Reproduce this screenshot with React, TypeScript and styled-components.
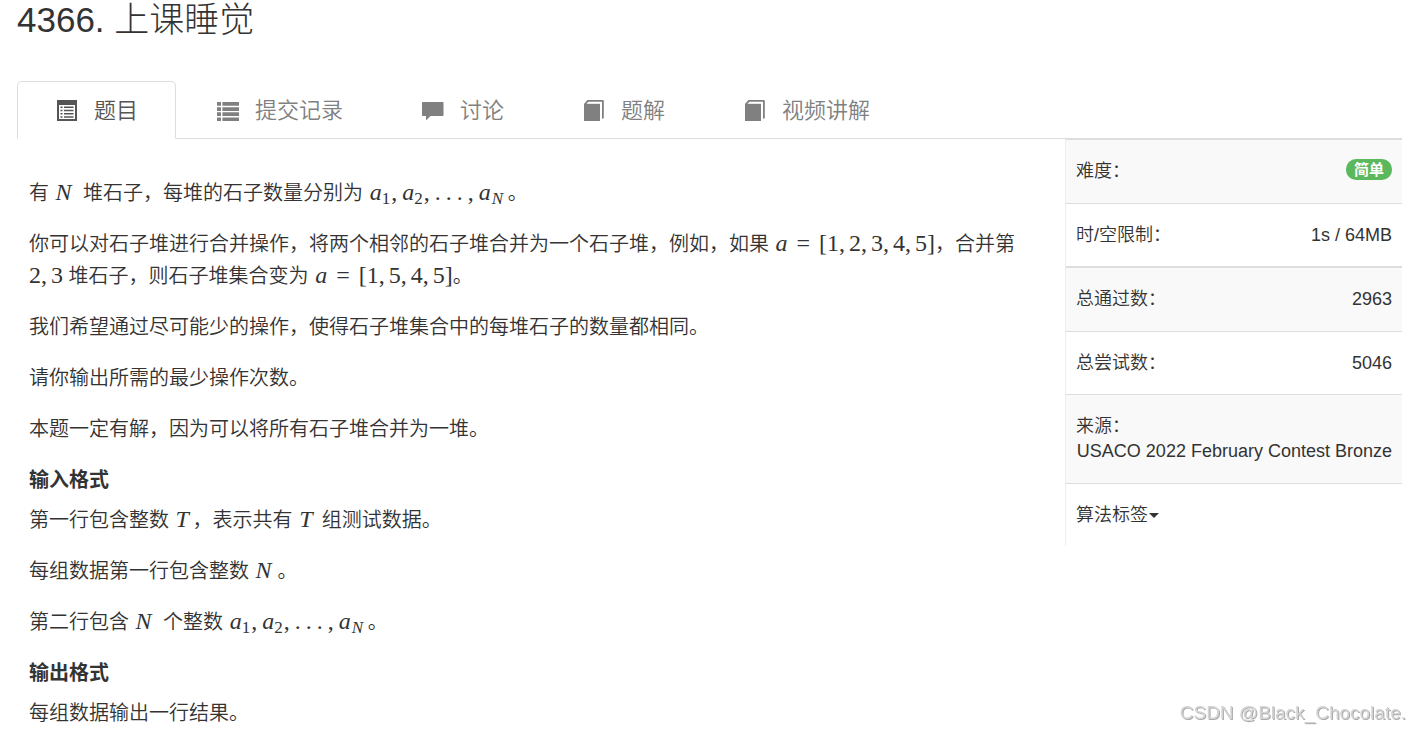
import React from "react";
import styled, { createGlobalStyle } from "styled-components";

const GlobalStyle = createGlobalStyle`
  * { box-sizing: border-box; }
  body {
    margin: 0;
    background: #fff;
    color: #333;
    font-family: "Liberation Sans", "Noto Sans CJK SC", sans-serif;
    font-size: 18px;
    font-weight: 350;
  }
`;

const Page = styled.div`
  padding: 0 19px 0 17px;
`;

const Title = styled.h1`
  margin: 0 0 42px;
  font-size: 35px;
  line-height: 39px;
  font-weight: 300;
`;

const Tabs = styled.nav`
  display: flex;
  gap: 2px;
  border-bottom: 1px solid #ddd;
`;

const Tab = styled.a<{ $active?: boolean }>`
  display: flex;
  align-items: center;
  gap: 16px;
  height: 58px;
  margin-bottom: -1px;
  padding: 2px 37px 0 38px;
  border: 1px solid ${(p) => (p.$active ? "#ddd" : "transparent")};
  border-bottom-color: ${(p) => (p.$active ? "#fff" : "transparent")};
  border-radius: 5px 5px 0 0;
  color: ${(p) => (p.$active ? "#555" : "#808080")};
  font-size: 22px;
  line-height: 32px;
  text-decoration: none;
  white-space: nowrap;
`;

const Glyph = styled.svg`
  width: 22px;
  height: 22px;
  flex: none;
  fill: currentColor;
`;

const Columns = styled.div`
  display: flex;
  align-items: flex-start;
`;

const Statement = styled.main`
  flex: 1;
  min-width: 0;
  padding: 38px 28px 0 12px;
  font-size: 20px;
  line-height: 32px;
`;

const Paragraph = styled.p`
  margin: 0 0 19px;
`;

const Heading = styled.h2`
  margin: 0 0 8px;
  font-size: 20px;
  line-height: 32px;
  font-weight: 700;
`;

const MathText = styled.span`
  font-family: "Liberation Serif", serif;
  font-size: 24px;
  line-height: 24px;
  font-weight: 400;
  white-space: nowrap;
`;

const Variable = styled.i<{ $width: number }>`
  display: inline-block;
  width: ${(p) => p.$width}px;
  padding-left: 1px;
`;

const Subscript = styled.span`
  display: inline-block;
  position: relative;
  top: 4px;
  margin-right: 1px;
  font-size: 17px;
  line-height: 17px;
`;

const Comma = styled.span`
  margin-right: 4px;
`;

const Dots = styled.span`
  display: inline-flex;
  gap: 5px;
  margin: 0 5px 0 1px;
`;

const Equals = styled.span`
  margin: 0 9px;
`;

const Info = styled.table`
  display: block;
  width: 337px;
  flex: none;
  border-top: 1px solid #ddd;
  border-left: 1px solid #eee;
  border-spacing: 0;
  line-height: 25px;
`;

const InfoBody = styled.tbody`
  display: block;
  & + & { border-top: 2px solid #ddd; }
`;

const InfoRow = styled.tr<{ $shaded?: boolean }>`
  display: flex;
  flex-wrap: wrap;
  justify-content: space-between;
  padding: 19px 10px ${(p) => (p.$shaded ? 19 : 18)}px;
  background: ${(p) => (p.$shaded ? "#f9f9f9" : "#fff")};
  & + & { border-top: 1px solid #ddd; }
`;

const Label = styled.th`
  padding: 0;
  font-weight: 350;
  text-align: left;
`;

const Value = styled.td`
  margin-left: auto;
  padding: 0;
  font-weight: 400;
`;

const Badge = styled.span`
  display: block;
  padding: 0 8px;
  border-radius: 10px;
  background: #5cb85c;
  color: #fff;
  font-size: 15px;
  line-height: 21px;
  font-weight: 700;
`;

const TagButton = styled.button`
  display: flex;
  align-items: center;
  gap: 1px;
  padding: 0;
  border: 0;
  background: none;
  color: inherit;
  font: inherit;
`;

const Caret = styled.span`
  border: 5px solid transparent;
  border-top-color: currentColor;
  border-bottom: 0;
`;

const Watermark = styled.div`
  position: fixed;
  right: 15px;
  bottom: 8px;
  color: #d4d4d4;
  font-size: 19px;
  line-height: 22px;
  font-weight: 400;
  text-shadow: 1px 1px 0 #aaa;
`;

const ListAltIcon = () => (
  <Glyph viewBox="0 0 22 22" aria-hidden="true">
    <path fillRule="evenodd" d="M1 0h20v21H1zM3 5v14h16V5z" />
    <path d="M4.5 6.5h2V8h-2zM4.5 9.7h2v1.6h-2zM4.5 13h2v1.6h-2zM4.5 16.2h2v1.6h-2zM8 6.5h9.5V8H8zM8 9.7h9.5v1.6H8zM8 13h9.5v1.6H8zM8 16.2h9.5v1.6H8z" />
  </Glyph>
);

const ListIcon = () => (
  <Glyph viewBox="0 0 22 22" aria-hidden="true">
    <path d="M0 2h4v3.700H0zM0 7.200h4v3.700H0zM0 12.300h4v3.700H0zM0 17.400h4v3.700H0zM5.400 2H22v3.700H5.400zM5.400 7.200H22v3.700H5.400zM5.400 12.300H22v3.700H5.400zM5.400 17.400H22v3.700H5.400z" />
  </Glyph>
);

const CommentIcon = () => (
  <Glyph viewBox="0 0 22 22" aria-hidden="true">
    <path d="M.8 2h19.900q.8 0 .8.8v12.400q0 .8-.8.8H8.500L4 20.500V16H.8q-.8 0-.8-.8V2.800Q0 2 .8 2z" />
  </Glyph>
);

const BookIcon = () => (
  <Glyph viewBox="0 0 22 22" aria-hidden="true">
    <path d="M1 3.800h16V21H1z" />
    <path d="M1 4L4.400 0H20q.8 0 .8.800V18l-1.800 1V1.800H5.400L3.400 4z" />
  </Glyph>
);

const tabs = [
  { label: "题目", Icon: ListAltIcon, active: true },
  { label: "提交记录", Icon: ListIcon },
  { label: "讨论", Icon: CommentIcon },
  { label: "题解", Icon: BookIcon },
  { label: "视频讲解", Icon: BookIcon },
];

const VarN = () => <MathText><Variable $width={23}>N</Variable></MathText>;
const VarT = () => <MathText><Variable $width={18}>T</Variable></MathText>;
const VarA = () => <Variable $width={13}>a</Variable>;

const Numbers = ({ items }: { items: number[] }) => (
  <>
    {items.map((n, i) => (
      <React.Fragment key={i}>
        {n}
        {i < items.length - 1 && <Comma>,</Comma>}
      </React.Fragment>
    ))}
  </>
);

const ArrayMath = ({ items }: { items: number[] }) => (
  <MathText>
    <VarA />
    <Equals>=</Equals>[<Numbers items={items} />]
  </MathText>
);

const Sequence = () => (
  <MathText>
    <VarA /><Subscript>1</Subscript><Comma>,</Comma>
    <VarA /><Subscript>2</Subscript><Comma>,</Comma>
    <Dots><span>.</span><span>.</span><span>.</span></Dots><Comma>,</Comma>
    <VarA /><Subscript><Variable $width={16}>N</Variable></Subscript>
  </MathText>
);

export default function App() {
  return (
    <>
      <GlobalStyle />
      <Page>
        <Title>4366. 上课睡觉</Title>
        <Tabs>
          {tabs.map(({ label, Icon, active }) => (
            <Tab key={label} href="#" $active={active}>
              <Icon />
              {label}
            </Tab>
          ))}
        </Tabs>
        <Columns>
          <Statement>
            <Paragraph>有 <VarN /> 堆石子，每堆的石子数量分别为 <Sequence />。</Paragraph>
            <Paragraph>
              你可以对石子堆进行合并操作，将两个相邻的石子堆合并为一个石子堆，例如，如果{" "}
              <ArrayMath items={[1, 2, 3, 4, 5]} />，合并第{" "}
              <MathText><Numbers items={[2, 3]} /></MathText> 堆石子，则石子堆集合变为{" "}
              <ArrayMath items={[1, 5, 4, 5]} />。
            </Paragraph>
            <Paragraph>我们希望通过尽可能少的操作，使得石子堆集合中的每堆石子的数量都相同。</Paragraph>
            <Paragraph>请你输出所需的最少操作次数。</Paragraph>
            <Paragraph>本题一定有解，因为可以将所有石子堆合并为一堆。</Paragraph>
            <Heading>输入格式</Heading>
            <Paragraph>第一行包含整数 <VarT />，表示共有 <VarT /> 组测试数据。</Paragraph>
            <Paragraph>每组数据第一行包含整数 <VarN />。</Paragraph>
            <Paragraph>第二行包含 <VarN /> 个整数 <Sequence />。</Paragraph>
            <Heading>输出格式</Heading>
            <Paragraph>每组数据输出一行结果。</Paragraph>
          </Statement>
          <Info>
            <InfoBody>
              <InfoRow $shaded>
                <Label scope="row">难度：</Label>
                <Value><Badge>简单</Badge></Value>
              </InfoRow>
              <InfoRow>
                <Label scope="row">时/空限制：</Label>
                <Value>1s / 64MB</Value>
              </InfoRow>
            </InfoBody>
            <InfoBody>
              <InfoRow $shaded>
                <Label scope="row">总通过数：</Label>
                <Value>2963</Value>
              </InfoRow>
              <InfoRow>
                <Label scope="row">总尝试数：</Label>
                <Value>5046</Value>
              </InfoRow>
              <InfoRow $shaded>
                <Label scope="row">来源：</Label>
                <Value>USACO 2022 February Contest Bronze</Value>
              </InfoRow>
              <InfoRow>
                <Label scope="row">
                  <TagButton type="button">算法标签<Caret /></TagButton>
                </Label>
              </InfoRow>
            </InfoBody>
          </Info>
        </Columns>
      </Page>
      <Watermark>CSDN @Black_Chocolate.</Watermark>
    </>
  );
}
